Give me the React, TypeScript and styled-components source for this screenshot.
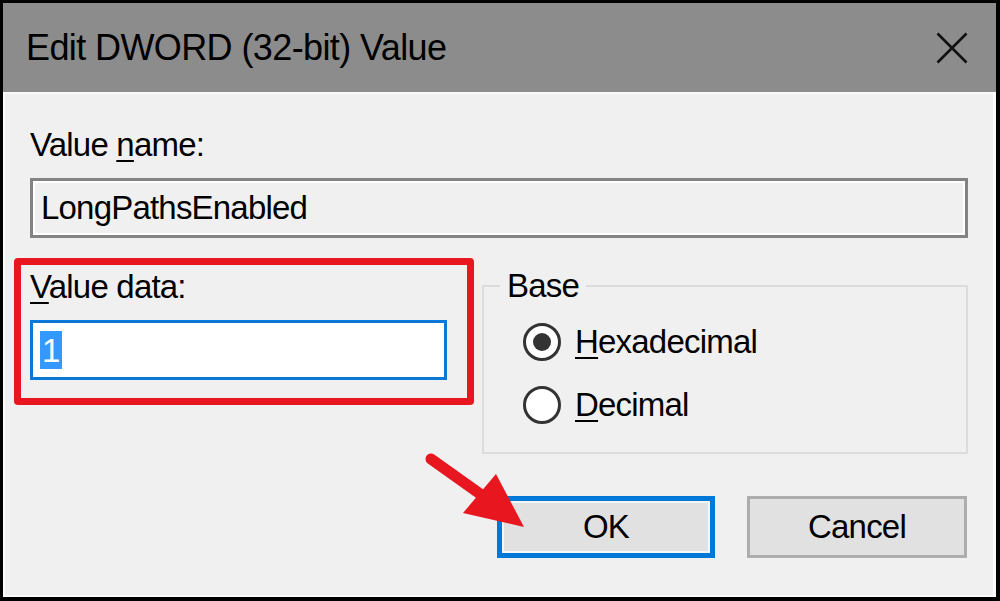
import React from 'react'
import styled, { createGlobalStyle } from 'styled-components'

const GlobalStyle = createGlobalStyle`
  html, body {
    margin: 0;
    padding: 0;
    background: #000;
  }
  body {
    font-family: "Liberation Sans", Arial, sans-serif;
  }
`

const Window = styled.div`
  position: relative;
  width: 1000px;
  height: 601px;
  box-sizing: border-box;
  border-style: solid;
  border-color: #000;
  border-width: 3px 4px 4px 3px;
  display: flex;
  flex-direction: column;
  background: #f0f0f0;
`

const TitleBar = styled.div`
  flex: none;
  height: 89px;
  background: #8c8c8c;
  display: flex;
  align-items: center;
  justify-content: space-between;
  padding: 0 28px 0 23px;
`

const Title = styled.span`
  font-size: 36px;
  letter-spacing: -0.6px;
  line-height: 40px;
  color: #000;
`

const CloseIcon = styled.svg`
  display: block;
  width: 32px;
  height: 32px;
`

const Body = styled.div`
  flex: 1;
  display: flex;
  flex-direction: column;
  background: #f0f0f0;
  border-style: solid;
  border-color: #fbfbfb;
  border-width: 2px 3px 2px 2px;
  padding: 33px 25px 0 25px;
`

const Label = styled.div`
  font-size: 33px;
  letter-spacing: -0.8px;
  line-height: 36px;
  color: #000;
`

const Key = styled.span`
  text-decoration: underline;
  text-decoration-thickness: 2px;
  text-underline-offset: 4px;
`

const NameBox = styled.div`
  margin-top: 15px;
  height: 60px;
  box-sizing: border-box;
  border: 3px solid #838383;
  box-shadow: inset 0 0 0 2px #fff;
  background: #f0f0f0;
  display: flex;
  align-items: center;
  padding: 0 8px;
  font-size: 33px;
  letter-spacing: -0.8px;
  color: #000;
`

const DataRow = styled.div`
  display: flex;
  align-items: flex-start;
  gap: 8px;
  margin-top: 20px;
`

const RedFrame = styled.div`
  flex: none;
  margin-left: -16px;
  border: 7px solid #e8161f;
  border-radius: 4px;
  padding: 4px 20px 18px 9px;
`

const DataInput = styled.div`
  margin-top: 15px;
  width: 417px;
  height: 60px;
  box-sizing: border-box;
  border: 3px solid #0a78d7;
  background: #fff;
  padding-left: 7px;
  display: flex;
  align-items: center;
`

const Selection = styled.span`
  background: #3399ff;
  color: #fff;
  height: 38px;
  line-height: 39px;
  padding: 0 2px;
  font-size: 33px;
`

const Group = styled.fieldset`
  flex: 1;
  min-width: 0;
  margin: 10px 0 0 0;
  padding: 0 0 28px 0;
  border: 2px solid #dcdcdc;
`

const Legend = styled.legend`
  margin-left: 16px;
  padding: 0 7px;
  font-size: 33px;
  letter-spacing: -0.8px;
  line-height: 36px;
  color: #000;
`

const RadioList = styled.div`
  display: flex;
  flex-direction: column;
  gap: 25px;
  padding: 19px 0 0 39px;
`

const RadioRow = styled.div`
  display: flex;
  align-items: center;
  gap: 14px;
  height: 38px;
  font-size: 33px;
  letter-spacing: -0.8px;
  color: #000;
`

const RadioCircle = styled.span<{ $checked?: boolean }>`
  flex: none;
  width: 38px;
  height: 38px;
  box-sizing: border-box;
  border: 3px solid #333;
  border-radius: 50%;
  background: #fff;
  display: flex;
  align-items: center;
  justify-content: center;

  &::after {
    content: '';
    display: ${p => (p.$checked ? 'block' : 'none')};
    width: 18px;
    height: 18px;
    border-radius: 50%;
    background: #333;
  }
`

const ButtonRow = styled.div`
  display: flex;
  justify-content: flex-end;
  gap: 32px;
  margin-top: 42px;
  padding-right: 1px;
`

const Button = styled.div<{ $width: number; $default?: boolean }>`
  width: ${p => p.$width}px;
  height: 62px;
  box-sizing: border-box;
  background: #e1e1e1;
  border: ${p => (p.$default ? '5px solid #0078d7' : '3px solid #adadad')};
  box-shadow: ${p => (p.$default ? 'inset 0 0 0 2px #f6f6f6' : 'none')};
  display: flex;
  align-items: center;
  justify-content: center;
  font-size: 33px;
  letter-spacing: -0.8px;
  color: #000;
`

const Arrow = styled.svg`
  position: absolute;
  left: 417px;
  top: 445px;
  width: 110px;
  height: 85px;
  pointer-events: none;
`

const App = () => {
  return (
    <>
      <GlobalStyle />
      <Window>
        <TitleBar>
          <Title>Edit DWORD (32-bit) Value</Title>
          <CloseIcon viewBox='0 0 32 32'>
            <path d='M1.5 1.5 L30.5 30.5 M30.5 1.5 L1.5 30.5' stroke='#111' strokeWidth='2.6' fill='none' />
          </CloseIcon>
        </TitleBar>
        <Body>
          <Label>
            Value <Key>n</Key>ame:
          </Label>
          <NameBox>LongPathsEnabled</NameBox>
          <DataRow>
            <RedFrame>
              <Label>
                <Key>V</Key>alue data:
              </Label>
              <DataInput>
                <Selection>1</Selection>
              </DataInput>
            </RedFrame>
            <Group>
              <Legend>Base</Legend>
              <RadioList>
                <RadioRow>
                  <RadioCircle $checked />
                  <span>
                    <Key>H</Key>exadecimal
                  </span>
                </RadioRow>
                <RadioRow>
                  <RadioCircle />
                  <span>
                    <Key>D</Key>ecimal
                  </span>
                </RadioRow>
              </RadioList>
            </Group>
          </DataRow>
          <ButtonRow>
            <Button $width={218} $default>OK</Button>
            <Button $width={220}>Cancel</Button>
          </ButtonRow>
        </Body>
        <Arrow viewBox='420 448 110 85'>
          <line x1='431' y1='459' x2='483' y2='496' stroke='#e8161f' strokeWidth='11' strokeLinecap='round' />
          <polygon points='463,513 496,474 524,527' fill='#e8161f' />
        </Arrow>
      </Window>
    </>
  )
}

export default App
